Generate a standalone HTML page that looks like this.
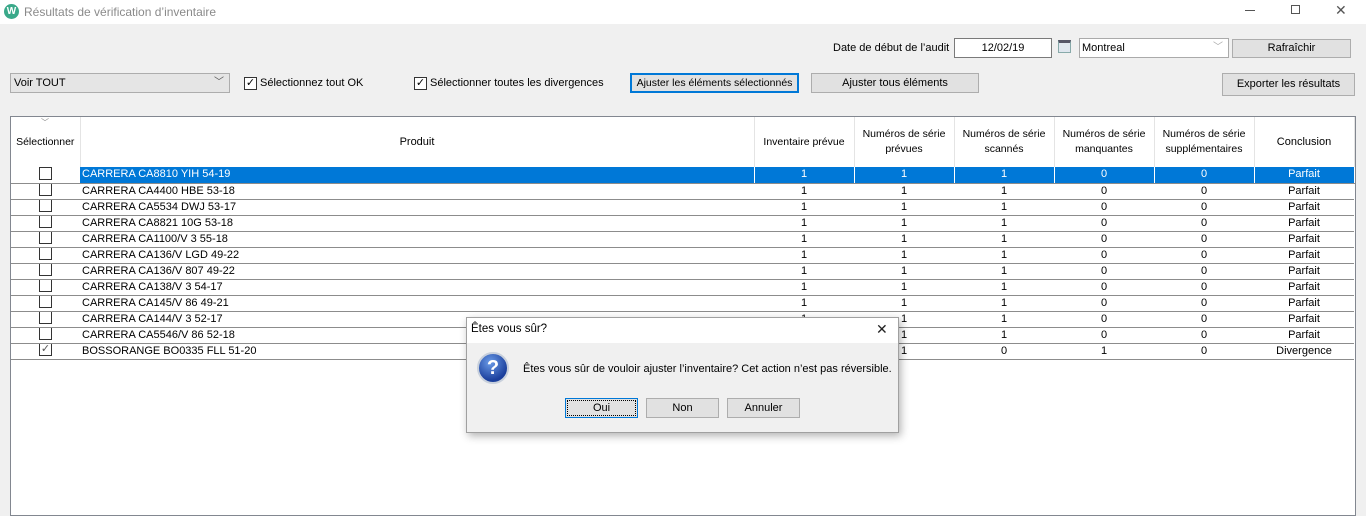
<!DOCTYPE html>
<html><head><meta charset="utf-8"><style>
*{margin:0;padding:0;box-sizing:border-box}
body{width:1366px;height:507px;background:#f0f0f0;font-family:"Liberation Sans",sans-serif;font-size:11px;color:#000;position:relative;overflow:hidden}
.a{position:absolute;white-space:nowrap}
.btn{position:absolute;background:#e1e1e1;border:1px solid #adadad;text-align:center;line-height:16px;font-size:11px;white-space:nowrap}
.cb{position:absolute;width:13px;height:13px;border:1px solid #333;background:#fff}
table{position:absolute;left:11px;top:117px;border-collapse:collapse;table-layout:fixed;background:#fff}
td{height:16px;padding:0;text-align:center;font-size:11px;line-height:15px;border-bottom:1px solid #8c8c8c;white-space:nowrap;overflow:hidden}
td.p{text-align:left;padding-left:2px}
tr.h td{height:50px;border-bottom:none;border-right:1px solid #e4e4e4;line-height:15px;font-size:11px}
tr.s td.x{background:#0078d7;color:#fff;border-right:1px solid #fff}
.ck{display:inline-block;width:13px;height:13px;border:1px solid #333;background:#fff;vertical-align:middle;margin-top:-2px}
</style></head><body>
<div class="a" style="left:0;top:0;width:1366px;height:24px;background:#fff"></div>
<div class="a" style="left:4px;top:4px;width:15px;height:15px;border-radius:50%;background:#3aa98a;color:#fff;font-weight:bold;font-size:10px;text-align:center;line-height:15px">W</div>
<div class="a" style="left:24px;top:5px;color:#8a8a8a;font-size:12px">Résultats de vérification d’inventaire</div>
<div class="a" style="left:1245px;top:10px;width:10px;height:1px;background:#555"></div>
<div class="a" style="left:1291px;top:5px;width:9px;height:9px;border:1px solid #555"></div>
<div class="a" style="left:1335px;top:2px;font-size:14px;color:#555">✕</div>

<div class="a" style="left:833px;top:42px">Date de début de l’audit</div>
<div class="a" style="left:954px;top:38px;width:98px;height:20px;background:#fff;border:1px solid #7a7a7a;text-align:center;line-height:18px">12/02/19</div>
<div class="a" style="left:1058px;top:40px;width:13px;height:13px;background:#dfe6ee;border:1px solid #8aa;border-top:3px solid #556"></div>
<div class="a" style="left:1079px;top:38px;width:150px;height:20px;background:#fff;border:1px solid #aaa;line-height:18px;padding-left:2px">Montreal<span style="position:absolute;right:5px;color:#aaa;font-size:10px">﹀</span></div>
<div class="btn" style="left:1232px;top:39px;width:119px;height:19px">Rafraîchir</div>

<div class="a" style="left:10px;top:73px;width:220px;height:20px;background:#e5e5e5;border:1px solid #adadad;line-height:18px;padding-left:3px">Voir TOUT<span style="position:absolute;right:5px;color:#555;font-size:10px">﹀</span></div>
<div class="cb" style="left:244px;top:77px;text-align:center;line-height:11px;font-size:11px">✓</div>
<div class="a" style="left:260px;top:77px">Sélectionnez tout OK</div>
<div class="cb" style="left:414px;top:77px;text-align:center;line-height:11px;font-size:11px">✓</div>
<div class="a" style="left:430px;top:77px">Sélectionner toutes les divergences</div>
<div class="btn" style="left:630px;top:73px;width:169px;height:20px;border:1px solid #0078d7;box-shadow:inset 0 0 0 1px #0078d7;line-height:18px;font-size:10.5px">Ajuster les éléments sélectionnés</div>
<div class="btn" style="left:811px;top:73px;width:168px;height:20px;line-height:18px">Ajuster tous éléments</div>
<div class="btn" style="left:1222px;top:73px;width:133px;height:23px;line-height:21px">Exporter les résultats</div>

<div class="a" style="left:10px;top:116px;width:1346px;height:400px;background:#fff;border:1px solid #828790"></div>
<table>
<colgroup><col style="width:69px"><col style="width:674px"><col style="width:100px"><col style="width:100px"><col style="width:100px"><col style="width:100px"><col style="width:100px"><col style="width:100px"></colgroup>
<tr class="h"><td style="position:relative;font-size:10.5px">Sélectionner<span style="position:absolute;left:30px;top:-2px;font-size:8px;color:#888">﹀</span></td><td>Produit</td><td style="font-size:10.5px">Inventaire prévue</td><td style="font-size:10.5px">Numéros de série<br>prévues</td><td style="font-size:10.5px">Numéros de série<br>scannés</td><td style="font-size:10.5px">Numéros de série<br>manquantes</td><td style="font-size:10.5px">Numéros de série<br>supplémentaires</td><td>Conclusion</td></tr>
<tr class="s"><td><span class="ck"></span></td><td class="p x">CARRERA CA8810 YIH 54-19</td><td class="x">1</td><td class="x">1</td><td class="x">1</td><td class="x">0</td><td class="x">0</td><td class="x">Parfait</td></tr>
<tr><td><span class="ck"></span></td><td class="p">CARRERA CA4400 HBE 53-18</td><td>1</td><td>1</td><td>1</td><td>0</td><td>0</td><td>Parfait</td></tr>
<tr><td><span class="ck"></span></td><td class="p">CARRERA CA5534 DWJ 53-17</td><td>1</td><td>1</td><td>1</td><td>0</td><td>0</td><td>Parfait</td></tr>
<tr><td><span class="ck"></span></td><td class="p">CARRERA CA8821 10G 53-18</td><td>1</td><td>1</td><td>1</td><td>0</td><td>0</td><td>Parfait</td></tr>
<tr><td><span class="ck"></span></td><td class="p">CARRERA CA1100/V 3 55-18</td><td>1</td><td>1</td><td>1</td><td>0</td><td>0</td><td>Parfait</td></tr>
<tr><td><span class="ck"></span></td><td class="p">CARRERA CA136/V LGD 49-22</td><td>1</td><td>1</td><td>1</td><td>0</td><td>0</td><td>Parfait</td></tr>
<tr><td><span class="ck"></span></td><td class="p">CARRERA CA136/V 807 49-22</td><td>1</td><td>1</td><td>1</td><td>0</td><td>0</td><td>Parfait</td></tr>
<tr><td><span class="ck"></span></td><td class="p">CARRERA CA138/V 3 54-17</td><td>1</td><td>1</td><td>1</td><td>0</td><td>0</td><td>Parfait</td></tr>
<tr><td><span class="ck"></span></td><td class="p">CARRERA CA145/V 86 49-21</td><td>1</td><td>1</td><td>1</td><td>0</td><td>0</td><td>Parfait</td></tr>
<tr><td><span class="ck"></span></td><td class="p">CARRERA CA144/V 3 52-17</td><td>1</td><td>1</td><td>1</td><td>0</td><td>0</td><td>Parfait</td></tr>
<tr><td><span class="ck"></span></td><td class="p">CARRERA CA5546/V 86 52-18</td><td>1</td><td>1</td><td>1</td><td>0</td><td>0</td><td>Parfait</td></tr>
<tr><td><span class="ck" style="font-size:11px;line-height:11px;color:#555">✓</span></td><td class="p">BOSSORANGE BO0335 FLL 51-20</td><td>1</td><td>1</td><td>0</td><td>1</td><td>0</td><td>Divergence</td></tr>
</table>

<div class="a" style="left:466px;top:317px;width:433px;height:116px;background:#f0f0f0;border:1px solid #a0a0a0;box-shadow:2px 3px 8px rgba(0,0,0,.3)">
<div class="a" style="left:0;top:0;width:431px;height:25px;background:#fff"></div>
<div class="a" style="left:4px;top:5px;font-size:11.5px">Êtes vous sûr?</div>
<div class="a" style="left:409px;top:3px;font-size:14px;color:#222">✕</div>
<div class="a" style="left:10px;top:34px;width:32px;height:32px;border-radius:50%;background:radial-gradient(circle at 40% 30%,#6a9be8,#1b3f9c 70%);border:2px solid #c8d0dc;color:#fff;font-weight:bold;font-size:20px;text-align:center;line-height:28px">?</div>
<div class="a" style="left:56px;top:45px;font-size:11px">Êtes vous sûr de vouloir ajuster l’inventaire? Cet action n’est pas réversible.</div>
<div class="btn" style="left:98px;top:80px;width:73px;height:20px;border:1px solid #0078d7;line-height:18px"><span style="display:block;margin:1px;border:1px dotted #000;line-height:14px">Oui</span></div>
<div class="btn" style="left:179px;top:80px;width:73px;height:20px;line-height:18px">Non</div>
<div class="btn" style="left:260px;top:80px;width:73px;height:20px;line-height:18px">Annuler</div>
</div>
</body></html>
